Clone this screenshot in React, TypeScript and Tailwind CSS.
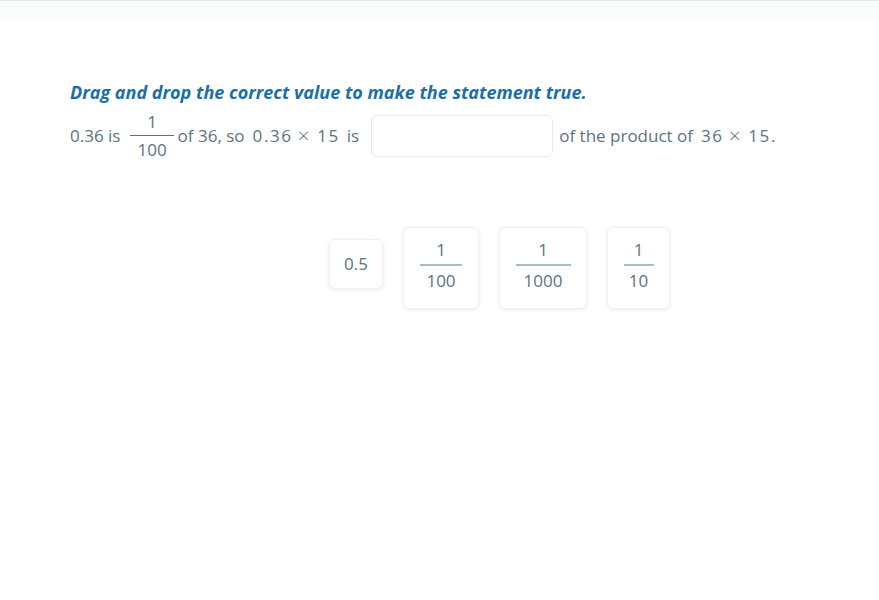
import React from 'react';

const Frac = ({ num, den, className = '' }: { num: string; den: string; className?: string }) => (
  <span className={`inline-flex flex-col items-stretch align-middle text-center ${className}`}>
    <span className="leading-none px-[7px]">{num}</span>
    <span className="block h-px bg-[#5b7480] my-[5px]" />
    <span className="leading-none px-[7px]">{den}</span>
  </span>
);

const Times = () => <span className="text-[21px] font-light leading-none ml-[5px] mr-[6px]">×</span>;

const Card = ({ children, className = '' }: { children: React.ReactNode; className?: string }) => (
  <div
    className={`bg-white rounded-md border border-[#eef1f2] shadow-[0_1px_4px_rgba(0,0,0,0.08)] flex items-center justify-center text-[#5b7480] ${className}`}
  >
    {children}
  </div>
);

export default function App() {
  const values = [
    { kind: 'dec', v: '0.5' },
    { kind: 'frac', num: '1', den: '100', w: 'w-[76px]', lw: 'w-[42px]' },
    { kind: 'frac', num: '1', den: '1000', w: 'w-[88px]', lw: 'w-[55px]' },
    { kind: 'frac', num: '1', den: '10', w: 'w-[63px]', lw: 'w-[30px]' },
  ];

  return (
    <div className="min-h-[600px] bg-white font-['Open_Sans',sans-serif]">
      <div className="h-px bg-[#e3e8ea]" />
      <div className="h-[18px] bg-[#fafcfb]" />

      <div className="pl-[70px] pt-[61px]">
        <h1 className="text-[18px] font-bold italic text-[#1c6fa6] leading-[24px]">
          Drag and drop the correct value to make the statement true.
        </h1>

        <div className="flex items-center mt-[9px] text-[17px] text-[#5b7480]">
          <span>0.36 is</span>
          <Frac num="1" den="100" className="text-[17px] ml-[10px] mr-[4px]" />
          <span>of 36, so</span>
          <span className="ml-[8px] tracking-[1.6px] flex items-center">
            <span>0.36</span>
            <Times />
            <span>15</span>
          </span>
          <span className="ml-[7px]">is</span>
          <div className="ml-[12px] w-[182px] h-[42px] rounded-md border border-[#e6eaec] bg-white" />
          <span className="ml-[6px]">of the product of</span>
          <span className="ml-[8px] tracking-[1.6px] flex items-center">
            <span>36</span>
            <Times />
            <span>15</span>
          </span>
          <span>.</span>
        </div>

        <div className="flex items-start gap-[20px] pl-[259px] mt-[69px]">
          {values.map((c, i) =>
            c.kind === 'dec' ? (
              <Card key={i} className="w-[54px] h-[50px] mt-[12px] text-[17px]">
                {c.v}
              </Card>
            ) : (
              <Card key={i} className={`${c.w} h-[82px] pb-[6px] text-[17px]`}>
                <div className="flex flex-col items-center">
                  <span className="leading-none">{c.num}</span>
                  <span className={`block h-[2px] bg-[#a9bcc2] my-[6px] ${c.lw}`} />
                  <span className="leading-none">{c.den}</span>
                </div>
              </Card>
            )
          )}
        </div>
      </div>
    </div>
  );
}
